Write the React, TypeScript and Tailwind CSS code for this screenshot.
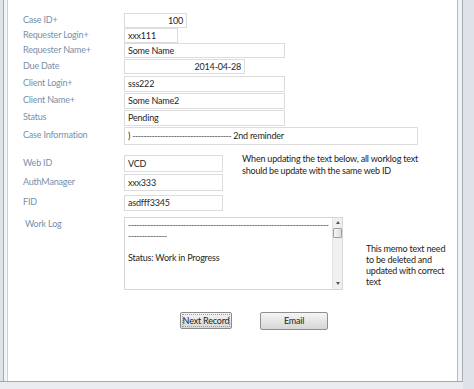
import React from "react";

type FieldProps = {
  label: string;
  value: React.ReactNode;
  rowClass: string;
  boxClass: string;
  alignRight?: boolean;
};

function Field({ label, value, rowClass, boxClass, alignRight }: FieldProps) {
  return (
    <div className={`flex items-center ${rowClass}`}>
      <div className="w-[101px] shrink-0 pb-[2px] text-[#7890a9] whitespace-nowrap">{label}</div>
      <div
        className={`h-full border border-[#dcdcdc] bg-white flex items-center px-[3px] text-[#262626] whitespace-nowrap overflow-hidden ${
          alignRight ? "justify-end" : ""
        } ${boxClass}`}
      >
        {value}
      </div>
    </div>
  );
}

const Dashes = ({ n }: { n: number }) => (
  <span className="tracking-[-0.6px] text-[#555]">{"-".repeat(n)}</span>
);

export default function App() {
  return (
    <div className="w-[474px] h-[389px] flex bg-[#e3e7ec] overflow-hidden font-['Lato','Liberation_Sans',sans-serif] text-[9px] leading-[12px] tracking-[-0.2px]">
      <div className="flex flex-col w-[463px]">
        <div className="flex flex-1 min-h-0">
          {/* left frame */}
          <div className="w-[3px] bg-[#dfe2e6]" />
          <div className="w-[1px] bg-[#a3a8ae]" />
          <div className="w-[3px] bg-[#f2f3f5]" />
          <div className="w-[1px] bg-[#cdd0d4]" />

          {/* form body */}
          <main className="flex-1 bg-white pl-[15px] flex flex-col">
            <Field label="Case ID+" value="100" rowClass="mt-[13px] h-[15px]" boxClass="w-[63px]" alignRight />
            <Field label="Requester Login+" value="xxx111" rowClass="h-[15px]" boxClass="w-[54px]" />
            <Field label="Requester Name+" value="Some Name" rowClass="h-[15px]" boxClass="w-[161px]" />
            <Field label="Due Date" value="2014-04-28" rowClass="mt-[1px] h-[15px]" boxClass="w-[121px]" alignRight />
            <Field label="Client Login+" value="sss222" rowClass="mt-[2px] h-[16px]" boxClass="w-[161px]" />
            <Field label="Client Name+" value="Some Name2" rowClass="mt-[1px] h-[16px]" boxClass="w-[161px]" />
            <Field label="Status" value="Pending" rowClass="mt-[1px] h-[16px]" boxClass="w-[161px]" />
            <Field
              label="Case Information"
              value={
                <>
                  )&nbsp;<Dashes n={36} />&nbsp;2nd reminder
                </>
              }
              rowClass="mt-[1px] h-[18px]"
              boxClass="w-[294px]"
            />

            <div className="flex mt-[10px]">
              <div className="flex flex-col">
                <Field label="Web ID" value="VCD" rowClass="h-[17px]" boxClass="w-[99px]" />
                <Field label="AuthManager" value="xxx333" rowClass="mt-[2px] h-[17px]" boxClass="w-[99px]" />
                <Field label="FID" value="asdfff3345" rowClass="mt-[4px] h-[16px]" boxClass="w-[99px]" />
              </div>
              <p className="ml-[19px] -mt-[2px] text-[#222] whitespace-nowrap">
                When updating the text below, all worklog text
                <br />
                should be update with the same web ID
              </p>
            </div>

            <div className="flex mt-[6px]">
              <div className="w-[101px] shrink-0 pl-[2px] pt-[1px] text-[#7890a9]">Work Log</div>
              <div className="w-[219px] h-[73px] border border-[#d6d6d6] bg-white flex">
                <div className="flex-1 min-w-0 pl-[3px] pt-[1px] leading-[11px] text-[#262626] overflow-hidden whitespace-nowrap">
                  <div>
                    <Dashes n={73} />
                  </div>
                  <div>
                    <Dashes n={14} />
                  </div>
                  <div>&nbsp;</div>
                  <div>Status: Work in Progress</div>
                </div>
                <div className="w-[10px] shrink-0 bg-[#f0f0f0] border-l border-[#e2e2e2] flex flex-col items-center">
                  <div className="mt-[3px] w-0 h-0 border-l-[2.5px] border-r-[2.5px] border-b-[3px] border-l-transparent border-r-transparent border-b-[#555]" />
                  <div className="mt-[4px] w-[9px] h-[10px] border border-[#a0a0a0] rounded-[1px] bg-gradient-to-r from-[#f6f6f6] to-[#dedede]" />
                  <div className="flex-1" />
                  <div className="mb-[4px] w-0 h-0 border-l-[2.5px] border-r-[2.5px] border-t-[3px] border-l-transparent border-r-transparent border-t-[#555]" />
                </div>
              </div>
              <p className="ml-[23px] mt-[26px] leading-[11px] text-[#222] whitespace-nowrap">
                This memo text need
                <br />
                to be deleted and
                <br />
                updated with correct
                <br />
                text
              </p>
            </div>

            <div className="flex items-start mt-[22px] pl-[157px] gap-[28px]">
              <button className="w-[52px] h-[17px] border border-[#8a8a8a] rounded-[2px] bg-gradient-to-b from-[#f4f4f4] to-[#d9d9d9] text-[#222] flex items-center justify-center p-[1px]">
                <span className="w-full h-full border border-dotted border-[#9a9a9a] flex items-center justify-center whitespace-nowrap">
                  Next Record
                </span>
              </button>
              <button className="w-[68px] h-[18px] border border-[#8f8f8f] rounded-[2px] bg-gradient-to-b from-[#f5f5f5] to-[#d6d6d6] text-[#222] flex items-center justify-center">
                Email
              </button>
            </div>
          </main>

          {/* right frame */}
          <div className="w-[1px] bg-[#b7bbc0]" />
          <div className="w-[4px] bg-[#f0f1f3]" />
          <div className="w-[1px] bg-[#a9aeb4]" />
        </div>
        <div className="h-[1px] bg-[#a3a8ae]" />
        <div className="h-[7px] bg-[#e9ebee]" />
      </div>
      <div className="flex-1 bg-[#dde2e8]" />
    </div>
  );
}
